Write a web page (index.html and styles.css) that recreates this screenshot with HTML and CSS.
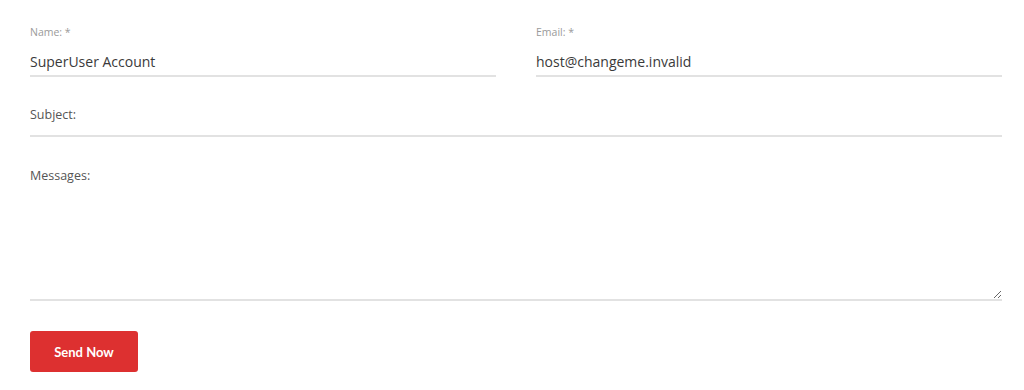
FILE: index.html
```html
<!DOCTYPE html>
<html lang="en">
<head>
  <meta charset="UTF-8">
  <meta name="viewport" content="width=device-width, initial-scale=1.0">
  <title>Contact</title>
  <link rel="stylesheet" href="styles.css">
</head>
<body>

<form class="contact-form">
  <!-- name / email -->
  <div class="form-row">
    <div class="field">
      <label for="name">Name: *</label>
      <input type="text" id="name" value="SuperUser Account">
    </div>
    <div class="field">
      <label for="email">Email: *</label>
      <input type="text" id="email" value="host@changeme.invalid">
    </div>
  </div>

  <input type="text" class="subject" placeholder="Subject:">

  <textarea class="message" placeholder="Messages:"></textarea>

  <button type="button" class="send-btn">Send Now</button>
</form>

</body>
</html>
```

FILE: styles.css
```css
body {
  margin: 0;
  background-color: #fff;
  font-family: "Open Sans", Arial, sans-serif;
  color: #444;
}

.contact-form {
  padding: 25px 22px 0 30px;
}

.form-row {
  display: grid;
  grid-template-columns: 1fr 1fr;
  gap: 40px;
}

.field label {
  display: block;
  font-size: 10.5px;
  line-height: 14px;
  color: #9a9a9a;
}

.contact-form input,
.contact-form textarea {
  display: block;
  width: 100%;
  box-sizing: border-box;
  border: none;
  border-bottom: 2px solid #e2e2e2;
  outline: none;
  padding: 0;
  font-family: "Open Sans", Arial, sans-serif;
  font-size: 14px;
  color: #3a3a3a;
  background: transparent;
}

.field input {
  margin-top: 7px;
  height: 31px;
  padding-top: 1px;
}

.subject {
  margin-top: 20px;
  height: 40px;
  padding-bottom: 4px !important;
  font-size: 12.5px !important;
}

.message {
  margin-top: 28px;
  height: 136px;
  padding-top: 1px !important;
  line-height: 20px;
  font-size: 12.5px !important;
  resize: vertical;
}

.contact-form input::placeholder,
.contact-form textarea::placeholder {
  color: #555;
  opacity: 1;
}

.send-btn {
  display: block;
  margin-top: 30px;
  width: 108px;
  height: 41px;
  background-color: #dd3030;
  color: #fff;
  border: none;
  border-radius: 3px;
  font-family: Lato, "Open Sans", sans-serif;
  font-weight: bold;
  font-size: 13px;
  cursor: pointer;
}
```
